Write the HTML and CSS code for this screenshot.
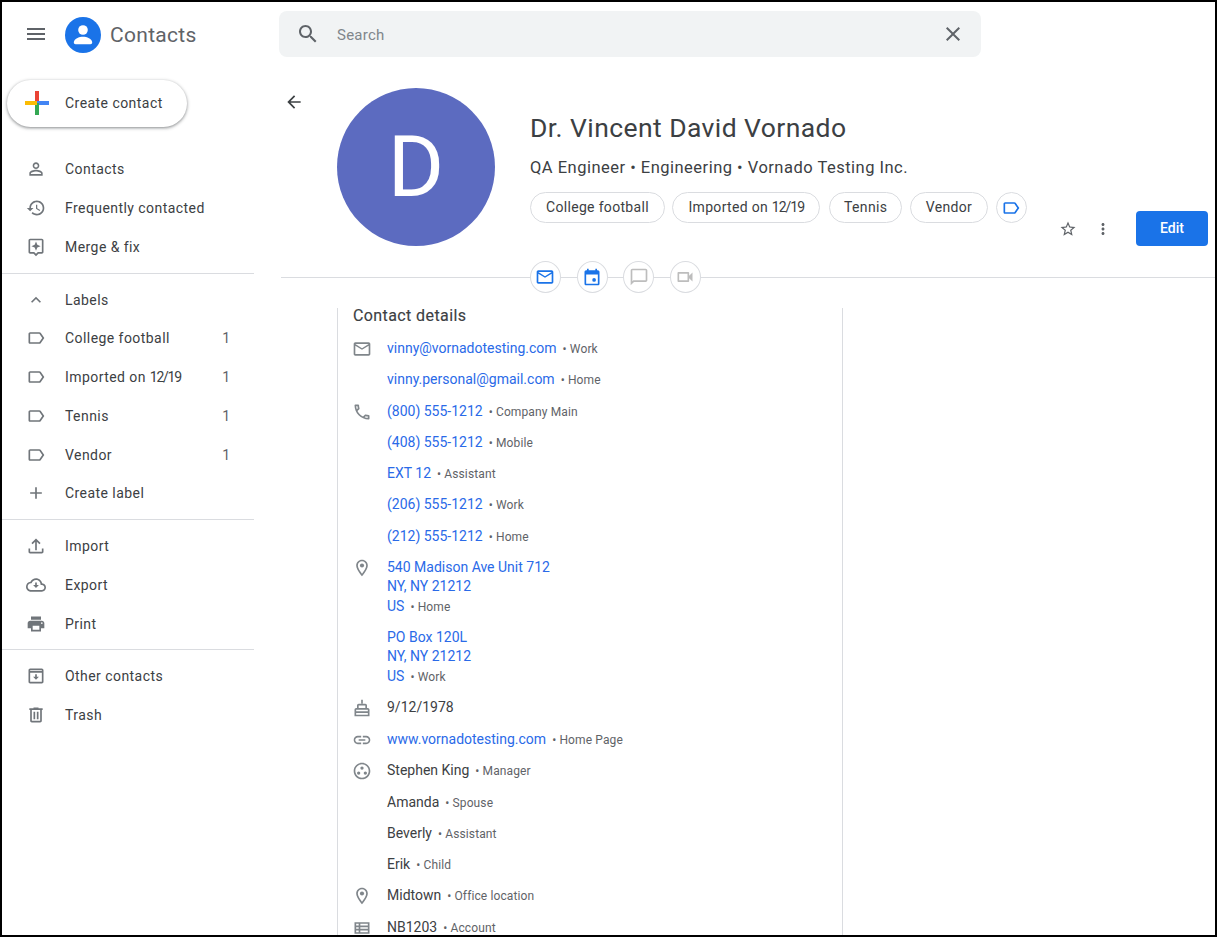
FILE: index.html
```html
<!DOCTYPE html>
<html lang="en">
<head>
<meta charset="utf-8">
<title>Contacts</title>
<link rel="stylesheet" href="styles.css">
</head>
<body>
<svg class="sprite" xmlns="http://www.w3.org/2000/svg">
  <symbol id="i-menu" viewBox="0 0 24 24"><path d="M3 18h18v-2H3v2zm0-5h18v-2H3v2zm0-7v2h18V6H3z"/></symbol>
  <symbol id="i-search" viewBox="0 0 24 24"><path d="M15.5 14h-.79l-.28-.27C15.41 12.59 16 11.11 16 9.5 16 5.91 13.09 3 9.5 3S3 5.91 3 9.5 5.91 16 9.5 16c1.61 0 3.09-.59 4.23-1.57l.27.28v.79l5 4.99L20.49 19l-4.99-5zm-6 0C7.01 14 5 11.99 5 9.5S7.01 5 9.5 5 14 7.01 14 9.5 11.99 14 9.5 14z"/></symbol>
  <symbol id="i-close" viewBox="0 0 24 24"><path d="M19 6.41L17.59 5 12 10.59 6.41 5 5 6.41 10.59 12 5 17.59 6.41 19 12 13.41 17.59 19 19 17.59 13.41 12z"/></symbol>
  <symbol id="i-person" viewBox="0 0 24 24"><path d="M12 5.9c1.16 0 2.1.94 2.1 2.1s-.94 2.1-2.1 2.1S9.9 9.16 9.9 8s.94-2.1 2.1-2.1m0 9c2.97 0 6.1 1.46 6.1 2.1v1.1H5.9V17c0-.64 3.13-2.1 6.1-2.1M12 4C9.79 4 8 5.79 8 8s1.79 4 4 4 4-1.79 4-4-1.79-4-4-4zm0 9c-2.67 0-8 1.34-8 4v3h16v-3c0-2.66-5.33-4-8-4z"/></symbol>
  <symbol id="i-history" viewBox="0 0 24 24"><path d="M13 3c-4.97 0-9 4.03-9 9H1l3.89 3.89.07.14L9 12H6c0-3.87 3.13-7 7-7s7 3.13 7 7-3.13 7-7 7c-1.93 0-3.68-.79-4.94-2.06l-1.42 1.42C8.27 19.99 10.51 21 13 21c4.97 0 9-4.03 9-9s-4.03-9-9-9zm-1 5v5l4.28 2.54.72-1.21-3.5-2.08V8H12z"/></symbol>
  <symbol id="i-merge" viewBox="0 0 24 24"><path d="M19 2H5c-1.1 0-2 .9-2 2v14c0 1.1.9 2 2 2h4l3 3 3-3h4c1.1 0 2-.9 2-2V4c0-1.1-.9-2-2-2zm0 16h-4.83L12 20.17 9.83 18H5V4h14v14z"/><path d="M12 5.5l1.6 3.9 3.9 1.6-3.9 1.6-1.6 3.9-1.6-3.9L6.500 11l3.9-1.6z"/></symbol>
  <symbol id="i-up" viewBox="0 0 24 24"><path d="M12 8l-6 6 1.41 1.41L12 10.83l4.59 4.58L18 14z"/></symbol>
  <symbol id="i-label" viewBox="0 0 24 24"><path d="M17.63 5.84C17.27 5.33 16.67 5 16 5L5 5.01C3.9 5.01 3 5.9 3 7v10c0 1.1.9 1.99 2 1.99L16 19c.67 0 1.27-.33 1.63-.84L22 12l-4.37-6.16zM16 17H5V7h11l3.55 5L16 17z"/></symbol>
  <symbol id="i-add" viewBox="0 0 24 24"><path d="M19 13h-6v6h-2v-6H5v-2h6V5h2v6h6v2z"/></symbol>
  <symbol id="i-upload" viewBox="0 0 24 24"><path d="M19 15v4H5v-4H3v4c0 1.1.9 2 2 2h14c1.1 0 2-.9 2-2v-4h-2zM11 6.830V17h2V6.830l3.09 3.090L17.500 8.500 12 3 6.500 8.500l1.410 1.420z"/></symbol>
  <symbol id="i-cloud" viewBox="0 0 24 24"><path d="M19.35 10.04C18.67 6.59 15.64 4 12 4 9.11 4 6.6 5.64 5.35 8.04 2.34 8.36 0 10.91 0 14c0 3.31 2.69 6 6 6h13c2.76 0 5-2.24 5-5 0-2.64-2.05-4.78-4.65-4.96zM19 18H6c-2.21 0-4-1.79-4-4s1.790-4 4-4h.71C7.37 7.690 9.48 6 12 6c3.04 0 5.500 2.460 5.500 5.500v.5H19c1.660 0 3 1.340 3 3s-1.340 3-3 3z"/><path d="M13 9h-2v3H8.500l3.500 3.500 3.500-3.500H13z"/></symbol>
  <symbol id="i-print" viewBox="0 0 24 24"><path d="M19 8H5c-1.66 0-3 1.34-3 3v6h4v4h12v-4h4v-6c0-1.66-1.34-3-3-3zm-3 11H8v-5h8v5zm3-7c-.55 0-1-.45-1-1s.45-1 1-1 1 .45 1 1-.45 1-1 1zm-1-9H6v4h12V3z"/></symbol>
  <symbol id="i-other" viewBox="0 0 24 24"><path d="M19 3H5c-1.1 0-2 .9-2 2v14c0 1.1.9 2 2 2h14c1.1 0 2-.9 2-2V5c0-1.1-.9-2-2-2zm0 16H5V8h14v11zM5 6V5h14v1H5z"/><path d="M13 10h-2v3H8.500l3.500 3.500 3.500-3.500H13z"/></symbol>
  <symbol id="i-trash" viewBox="0 0 24 24"><path d="M15 4V3H9v1H4v2h1v13c0 1.1.9 2 2 2h10c1.1 0 2-.9 2-2V6h1V4h-5zm2 15H7V6h10v13zM9 8h2v9H9zm4 0h2v9h-2z"/></symbol>
  <symbol id="i-back" viewBox="0 0 24 24"><path d="M20 11H7.83l5.59-5.59L12 4l-8 8 8 8 1.41-1.41L7.83 13H20v-2z"/></symbol>
  <symbol id="i-star" viewBox="0 0 24 24"><path d="M22 9.24l-7.19-.62L12 2 9.19 8.63 2 9.24l5.46 4.73L5.82 21 12 17.27 18.18 21l-1.63-7.03L22 9.24zM12 15.4l-3.76 2.27 1-4.28-3.32-2.88 4.38-.38L12 6.1l1.71 4.04 4.38.38-3.32 2.88 1 4.28L12 15.4z"/></symbol>
  <symbol id="i-more" viewBox="0 0 24 24"><path d="M12 8c1.1 0 2-.9 2-2s-.9-2-2-2-2 .9-2 2 .9 2 2 2zm0 2c-1.1 0-2 .9-2 2s.9 2 2 2 2-.9 2-2-.9-2-2-2zm0 6c-1.1 0-2 .9-2 2s.9 2 2 2 2-.9 2-2-.9-2-2-2z"/></symbol>
  <symbol id="i-mail" viewBox="0 0 24 24"><path d="M20 4H4c-1.1 0-1.99.9-1.99 2L2 18c0 1.1.9 2 2 2h16c1.1 0 2-.9 2-2V6c0-1.1-.9-2-2-2zm0 14H4V8l8 5 8-5v10zm-8-7L4 6h16l-8 5z"/></symbol>
  <symbol id="i-cal" viewBox="0 0 24 24"><path d="M19 4h-1V2h-2v2H8V2H6v2H5c-1.11 0-2 .9-2 2v14c0 1.1.89 2 2 2h14c1.1 0 2-.9 2-2V6c0-1.1-.9-2-2-2zm0 16H5V9h14v11z"/><circle cx="14.500" cy="15.500" r="2.200"/></symbol>
  <symbol id="i-chat" viewBox="0 0 24 24"><path d="M20 2H4c-1.1 0-2 .9-2 2v18l4-4h14c1.1 0 2-.9 2-2V4c0-1.1-.9-2-2-2zm0 14H5.170L4 17.170V4h16v12z"/></symbol>
  <symbol id="i-video" viewBox="0 0 24 24"><path d="M15 8v8H5V8h10m1-2H4c-.55 0-1 .45-1 1v10c0 .55.45 1 1 1h12c.55 0 1-.45 1-1v-3.500l4 4v-11l-4 4V7c0-.55-.45-1-1-1z"/></symbol>
  <symbol id="i-phone" viewBox="0 0 24 24"><path d="M6.540 5c.06.89.21 1.760.45 2.590l-1.200 1.200c-.41-1.200-.67-2.470-.76-3.790h1.510m9.860 12.020c.85.24 1.720.39 2.600.45v1.490c-1.320-.09-2.590-.35-3.800-.75l1.200-1.190M7.500 3H4c-.55 0-1 .45-1 1 0 9.390 7.610 17 17 17 .55 0 1-.45 1-1v-3.490c0-.55-.45-1-1-1-1.240 0-2.450-.2-3.570-.57-.1-.04-.21-.05-.31-.05-.26 0-.51.1-.71.29l-2.200 2.200c-2.830-1.450-5.150-3.760-6.590-6.590l2.200-2.200c.28-.28.36-.67.25-1.020C8.700 6.450 8.500 5.250 8.500 4c0-.55-.45-1-1-1z"/></symbol>
  <symbol id="i-place" viewBox="0 0 24 24"><path d="M12 2C8.130 2 5 5.130 5 9c0 5.250 7 13 7 13s7-7.750 7-13c0-3.870-3.130-7-7-7zM7 9c0-2.760 2.240-5 5-5s5 2.240 5 5c0 2.880-2.880 7.190-5 9.880C9.920 16.210 7 11.850 7 9z"/><circle cx="12" cy="9" r="2.500"/></symbol>
  <symbol id="i-cake" viewBox="0 0 24 24"><path d="M11 2h2v5h-2z"/><path d="M8 7h8c1.100 0 2 .9 2 2v3h1c1.100 0 2 .9 2 2v8H3v-8c0-1.100.9-2 2-2h1V9c0-1.100.9-2 2-2zm0 2v3h8V9H8zm-3 5v2h14v-2H5zm0 4v2h14v-2H5z"/></symbol>
  <symbol id="i-link" viewBox="0 0 24 24"><path d="M3.900 12c0-1.710 1.390-3.100 3.100-3.100h4V7H7c-2.760 0-5 2.240-5 5s2.240 5 5 5h4v-1.900H7c-1.710 0-3.100-1.390-3.100-3.100zM8 13h8v-2H8v2zm9-6h-4v1.900h4c1.710 0 3.100 1.390 3.100 3.100s-1.390 3.100-3.100 3.100h-4V17h4c2.760 0 5-2.240 5-5s-2.240-5-5-5z"/></symbol>
  <symbol id="i-rel" viewBox="0 0 24 24"><path d="M12 2C6.480 2 2 6.480 2 12s4.480 10 10 10 10-4.480 10-10S17.520 2 12 2zm0 18c-4.410 0-8-3.590-8-8s3.590-8 8-8 8 3.590 8 8-3.590 8-8 8z"/><circle cx="12" cy="8.500" r="2"/><circle cx="8" cy="14.500" r="2"/><circle cx="16" cy="14.500" r="2"/></symbol>
  <symbol id="i-list" viewBox="0 0 24 24"><path d="M3 5v14h18V5H3zm5 12H5v-2h3v2zm0-4H5v-2h3v2zm0-4H5V7h3v2zm11 8H10v-2h9v2zm0-4H10v-2h9v2zm0-4H10V7h9v2z"/></symbol>
</svg>

<div class="frame">
  <header class="topbar">
    <div class="brand">
      <svg class="icon hamburger"><use href="#i-menu"/></svg>
      <svg class="logo" viewBox="0 0 36 36"><circle cx="18" cy="18" r="18" fill="#1a73e8"/><circle cx="18" cy="13" r="4.800" fill="#fff"/><path d="M8.800 25.500c0-4 5.500-5.800 9.200-5.800s9.200 1.800 9.200 5.800c0 1-.8 1.700-1.700 1.700H10.500c-.9 0-1.700-.7-1.700-1.700z" fill="#fff"/></svg>
      <span class="app-name">Contacts</span>
    </div>
    <div class="search">
      <svg class="icon search-icon"><use href="#i-search"/></svg>
      <span class="search-text">Search</span>
      <svg class="icon search-close"><use href="#i-close"/></svg>
    </div>
  </header>

  <div class="workspace">
    <nav class="sidebar">
      <button class="create">
        <svg class="plus" viewBox="0 0 24 24"><rect x="10" y="0" width="4" height="12" fill="#ea4335"/><rect x="12" y="10" width="12" height="4" fill="#4285f4"/><rect x="10" y="12" width="4" height="12" fill="#34a853"/><rect x="0" y="10" width="12" height="4" fill="#fbbc04"/></svg>
        <span>Create contact</span>
      </button>
      <ul class="nav-group first">
        <li class="nav-row"><svg class="icon"><use href="#i-person"/></svg><span>Contacts</span></li>
        <li class="nav-row"><svg class="icon"><use href="#i-history"/></svg><span>Frequently contacted</span></li>
        <li class="nav-row"><svg class="icon"><use href="#i-merge"/></svg><span>Merge &amp; fix</span></li>
      </ul>
      <ul class="nav-group">
        <li class="nav-row"><svg class="icon"><use href="#i-up"/></svg><span>Labels</span></li>
        <li class="nav-row"><svg class="icon"><use href="#i-label"/></svg><span>College football</span><em>1</em></li>
        <li class="nav-row"><svg class="icon"><use href="#i-label"/></svg><span>Imported on <b class="tight">12/19</b></span><em>1</em></li>
        <li class="nav-row"><svg class="icon"><use href="#i-label"/></svg><span>Tennis</span><em>1</em></li>
        <li class="nav-row"><svg class="icon"><use href="#i-label"/></svg><span>Vendor</span><em>1</em></li>
        <li class="nav-row"><svg class="icon"><use href="#i-add"/></svg><span>Create label</span></li>
      </ul>
      <ul class="nav-group">
        <li class="nav-row"><svg class="icon"><use href="#i-upload"/></svg><span>Import</span></li>
        <li class="nav-row"><svg class="icon"><use href="#i-cloud"/></svg><span>Export</span></li>
        <li class="nav-row"><svg class="icon"><use href="#i-print"/></svg><span>Print</span></li>
      </ul>
      <ul class="nav-group">
        <li class="nav-row"><svg class="icon"><use href="#i-other"/></svg><span>Other contacts</span></li>
        <li class="nav-row"><svg class="icon"><use href="#i-trash"/></svg><span>Trash</span></li>
      </ul>
    </nav>

    <main class="main">
      <section class="profile">
        <div class="back-col"><svg class="icon back"><use href="#i-back"/></svg></div>
        <div class="avatar">D</div>
        <div class="info">
          <h1 class="name">Dr. Vincent David Vornado</h1>
          <p class="role">QA Engineer • Engineering • Vornado Testing Inc.</p>
          <div class="chips">
            <span class="chip">College football</span>
            <span class="chip">Imported on&nbsp;<b class="tight">12/19</b></span>
            <span class="chip chip-narrow">Tennis</span>
            <span class="chip">Vendor</span>
            <span class="chip-round"><svg class="icon-blue"><use href="#i-label"/></svg></span>
          </div>
        </div>
        <div class="actions">
          <svg class="icon star"><use href="#i-star"/></svg>
          <svg class="icon more"><use href="#i-more"/></svg>
          <button class="edit">Edit</button>
        </div>
      </section>

      <div class="quick">
        <span class="quick-btn"><svg class="icon-blue"><use href="#i-mail"/></svg></span>
        <span class="quick-btn"><svg class="icon-blue"><use href="#i-cal"/></svg></span>
        <span class="quick-btn"><svg class="icon-off"><use href="#i-chat"/></svg></span>
        <span class="quick-btn"><svg class="icon-off"><use href="#i-video"/></svg></span>
      </div>

      <section class="card">
        <h2 class="card-title">Contact details</h2>
        <div class="row"><svg class="icon-d"><use href="#i-mail"/></svg><div><a>vinny@vornadotesting.com</a><small>• Work</small></div></div>
        <div class="row"><i></i><div><a>vinny.personal@gmail.com</a><small>• Home</small></div></div>
        <div class="row"><svg class="icon-d"><use href="#i-phone"/></svg><div><a>(800) 555-1212</a><small>• Company Main</small></div></div>
        <div class="row"><i></i><div><a>(408) 555-1212</a><small>• Mobile</small></div></div>
        <div class="row"><i></i><div><a>EXT 12</a><small>• Assistant</small></div></div>
        <div class="row"><i></i><div><a>(206) 555-1212</a><small>• Work</small></div></div>
        <div class="row"><i></i><div><a>(212) 555-1212</a><small>• Home</small></div></div>
        <div class="row"><svg class="icon-d"><use href="#i-place"/></svg><div><a class="line">540 Madison Ave Unit 712</a><a class="line">NY, NY 21212</a><a>US</a><small>• Home</small></div></div>
        <div class="row"><i></i><div><a class="line">PO Box 120L</a><a class="line">NY, NY 21212</a><a>US</a><small>• Work</small></div></div>
        <div class="row"><svg class="icon-d"><use href="#i-cake"/></svg><div>9/12/1978</div></div>
        <div class="row"><svg class="icon-d"><use href="#i-link"/></svg><div><a>www.vornadotesting.com</a><small>• Home Page</small></div></div>
        <div class="row"><svg class="icon-d"><use href="#i-rel"/></svg><div>Stephen King<small>• Manager</small></div></div>
        <div class="row"><i></i><div>Amanda<small>• Spouse</small></div></div>
        <div class="row"><i></i><div>Beverly<small>• Assistant</small></div></div>
        <div class="row"><i></i><div>Erik<small>• Child</small></div></div>
        <div class="row"><svg class="icon-d"><use href="#i-place"/></svg><div>Midtown<small>• Office location</small></div></div>
        <div class="row"><svg class="icon-d"><use href="#i-list"/></svg><div>NB1203<small>• Account</small></div></div>
      </section>
    </main>
  </div>
</div>
</body>
</html>
```
FILE: styles.css
```css
* { box-sizing: border-box; }
html, body { margin: 0; height: 100%; overflow: hidden; background: #fff; }
body { font-family: Roboto, "Liberation Sans", sans-serif; color: #3c4043; }
.sprite { display: none; }
ul { list-style: none; margin: 0; padding: 0; }
h1, h2, p { margin: 0; font-weight: 400; }
button { font: inherit; border: 0; }
.tight { font-weight: 400; letter-spacing: -1.250px; }

.frame { width: 1217px; height: 937px; border: 2px solid #000; overflow: hidden; display: flex; flex-direction: column; background: #fff; }
.icon { width: 20px; height: 20px; fill: #70757a; flex: none; }

.topbar { height: 68px; flex: none; display: flex; align-items: flex-start; }
.brand { width: 277px; flex: none; display: flex; align-items: center; height: 46px; margin-top: 9px; padding-left: 22px; }
.hamburger { width: 24px; height: 24px; fill: #5f6368; }
.logo { width: 36px; height: 36px; margin-left: 17px; margin-top: 2px; flex: none; }
.app-name { font-size: 21px; color: #5f6368; margin-left: 9px; letter-spacing: .3px; margin-top: 2px; }
.search { width: 702px; height: 46px; margin-top: 9px; background: #f1f3f4; border-radius: 8px; display: flex; align-items: center; padding: 0 16px 0 17px; }
.search-icon { width: 24px; height: 24px; fill: #5f6368; }
.search-text { font-size: 15px; color: #80868b; margin-left: 17px; flex: 1; letter-spacing: .25px; padding-top: 1px; }
.search-close { width: 24px; height: 24px; fill: #5f6368; }

.workspace { flex: 1; display: flex; min-height: 0; }
.sidebar { width: 252px; flex: none; }
.create { margin: 10px 0 0 5px; width: 180px; height: 47px; border-radius: 24px; background: #fff; display: flex; align-items: center; padding: 0 0 1px 18px; box-shadow: 0 1px 3px 1px rgba(60,64,67,.25), 0 1px 2px rgba(60,64,67,.3); color: #3c4043; font-size: 14px; letter-spacing: .45px; }
.plus { width: 24px; height: 24px; margin-right: 16px; flex: none; }
.nav-group { padding: 6.500px 0; border-top: 1px solid #dadce0; }
.nav-group.first { border-top: 0; margin-top: 16.400px; }
.nav-row { height: 38.750px; display: flex; align-items: center; padding-left: 24px; font-size: 14px; letter-spacing: .44px; color: #3c4043; }
.nav-row span { margin-left: 19px; flex: 1; }
.nav-row em { font-style: normal; color: #5f6368; font-size: 14px; margin-right: 24px; letter-spacing: 0; }

.main { flex: 1; min-width: 0; padding-left: 27px; }
.profile { display: flex; margin-top: 18px; height: 158px; }
.back-col { width: 56px; flex: none; padding-top: 4px; }
.back { fill: #3c4043; margin-left: 3px; display: block; }
.avatar { width: 158px; height: 158px; border-radius: 50%; flex: none; background: #5c6bc0; color: #fff; display: flex; align-items: center; justify-content: center; font-size: 86px; line-height: 1; }
.info { margin-left: 35px; flex: none; width: 496px; }
.name { font-size: 26.500px; line-height: 32px; margin-top: 24px; color: #3c4043; letter-spacing: .42px; }
.role { font-size: 16.500px; line-height: 22px; margin-top: 13px; color: #3c4043; letter-spacing: .49px; }
.chips { display: flex; gap: 7.500px; margin-top: 13px; align-items: flex-start; }
.chip { height: 31px; border: 1px solid #dadce0; border-radius: 16px; display: flex; align-items: center; padding: 0 15px 1px; font-size: 14px; letter-spacing: .32px; color: #3c4043; white-space: nowrap; }
.chip .tight { letter-spacing: -1px; }
.chip-narrow { padding: 0 14px 1px; margin-left: 1.500px; }
.chip-round, .quick-btn { width: 31px; height: 31px; border: 1px solid #dadce0; border-radius: 50%; display: flex; align-items: center; justify-content: center; flex: none; background: #fff; }
.quick-btn { height: 32px; }
.icon-blue { width: 20px; height: 20px; fill: #1a73e8; margin-left: -1px; }
.icon-off { width: 20px; height: 20px; fill: #bdbdbd; }
.actions { flex: 1; display: flex; align-items: center; height: 35px; margin-top: 123px; }
.star { width: 18px; height: 18px; fill: #5f6368; margin-left: 33px; }
.more { width: 18px; height: 18px; fill: #5f6368; margin-left: 17px; }
.edit { width: 72px; height: 35px; margin-left: 24px; padding-bottom: 2px; background: #1a73e8; color: #fff; border-radius: 4px; font-size: 14px; font-weight: 500; flex: none; }

.quick { margin-top: 15px; height: 32px; display: flex; gap: 15.500px; padding-left: 249px; background: linear-gradient(#dadce0, #dadce0) 0 16px / 100% 1px no-repeat; }

.card { margin: 15px 0 0 56px; width: 506px; border-left: 1px solid #dadce0; border-right: 1px solid #dadce0; height: 640px; }
.card-title { font-size: 16px; line-height: 16px; color: #3c4043; padding-left: 15px; letter-spacing: .4px; -webkit-text-stroke: .15px #3c4043; }
.row { display: grid; grid-template-columns: 20px 1fr; column-gap: 15px; padding: 5.820px 0 5.820px 14px; font-size: 14px; line-height: 19.500px; color: #3c4043; }
.card-title + .row { margin-top: 9px; }
.row a { color: #2a6ae8; }
.row a.line { display: block; }
.row small { font-size: 12px; line-height: 1; color: #5f6368; margin-left: 6px; letter-spacing: .12px; }
.icon-d { width: 20px; height: 20px; fill: #80868b; }
```
